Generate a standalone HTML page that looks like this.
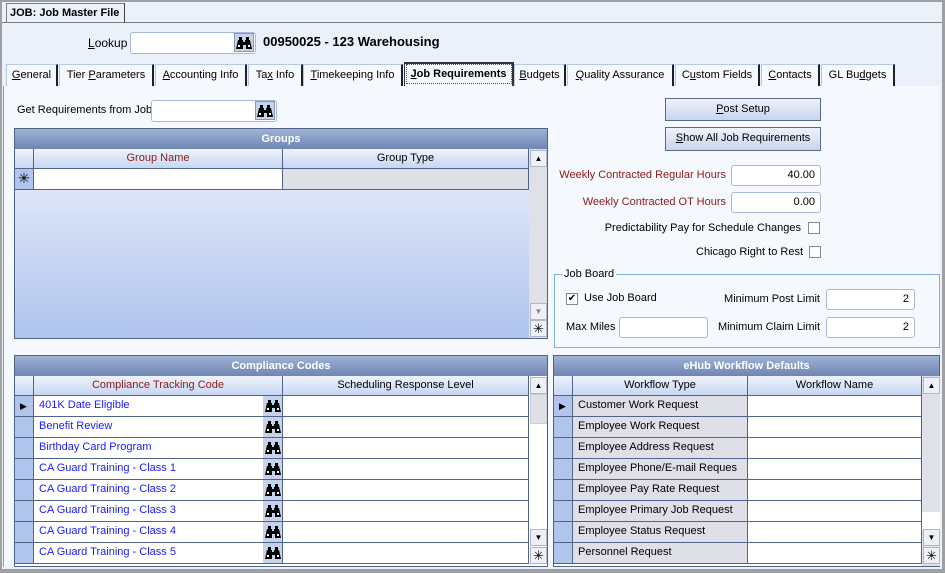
<!DOCTYPE html>
<html><head><meta charset="utf-8">
<style>
*{box-sizing:border-box;margin:0;padding:0}
body{width:945px;height:573px;overflow:hidden;background:#a0a0a0;font-family:"Liberation Sans",sans-serif;font-size:11px;color:#000;position:relative}
.a{position:absolute;white-space:nowrap}
#win{left:2px;top:2px;width:940px;height:567px;background:#eaf1fb}
#pane{left:3px;top:86px;width:936px;height:481px;background:#f5f8fd;border-left:1px solid #8a98b0}
.tab{position:absolute;top:64px;height:22px;background:#f5f8fd;border:1px solid #b8c8e0;border-right:2px solid #1a2030;border-bottom:none;text-align:center;line-height:20px;white-space:nowrap}
.inp{position:absolute;background:#fff;border:1px solid #a8b8d8;border-radius:3px}
.bin{position:absolute;width:20px;height:19px;background:#c4d2ea;border:1px solid #8896b0}
.btn{position:absolute;border:1px solid #5a6a88;background:linear-gradient(#eef2fb,#c9d5ee);text-align:center;line-height:21px}
.grid{position:absolute;border:1px solid #50648a;background:#fff}
.title{position:absolute;left:0;top:0;right:0;height:20px;background:linear-gradient(#9fb2d6,#6e86b2);color:#fff;font-weight:bold;text-align:center;line-height:20px}
.ch{position:absolute;height:20px;background:linear-gradient(#eef3fc,#c7d6f2);border-right:1px solid #50648a;border-bottom:1px solid #50648a;text-align:center;line-height:19px}
.cell{position:absolute;height:21px;border-right:1px solid #50648a;border-bottom:1px solid #50648a;line-height:18px;padding-left:5px;white-space:nowrap;overflow:hidden}
.ind{position:absolute;background:#b0c4ec;border-right:1px solid #50648a;border-bottom:1px solid #50648a}
.sb{position:absolute;background:#e0e0e8}
.sbb{position:absolute;width:17px;height:17px;background:#eef0f6;border:1px solid #b0b8c8;text-align:center;font-size:8px;line-height:15px}
.cb{position:absolute;width:12px;height:12px;border:1px solid #8a8a8a;background:#fff}
.r{text-align:right}
u{text-decoration:underline}
</style></head><body>
<svg width="0" height="0" style="position:absolute"><defs><symbol id="bn" viewBox="0 0 16 14"><path d="M3 1h3v3H3z M10 1h3v3h-3z M2 4h5v2h2V4h5l2 9h-6V9H7v4H0z" fill="#000"/><rect x="2" y="9" width="2" height="2" fill="#fff"/><rect x="12" y="9" width="2" height="2" fill="#fff"/></symbol></defs></svg>
<div id="win" class="a"></div>
<div class="a" style="left:6px;top:3px;width:119px;height:20px;background:#eaf1fb;border:1px solid #808080;border-bottom:none;font-weight:bold;font-size:11px;line-height:18px;padding-left:3px">JOB: Job Master File</div>
<div class="a" style="left:2px;top:22px;width:940px;height:1px;background:#808080"></div>
<div class="a" style="left:124px;top:3px;width:1px;height:20px;background:#404040"></div>

<div class="a" style="left:88px;top:36px;font-size:12px"><u>L</u>ookup</div>
<div class="inp" style="left:130px;top:32px;width:126px;height:22px"></div>
<div class="bin" style="left:234px;top:33px"><svg width="16" height="14" style="margin:2px 1px"><use href="#bn"/></svg></div>
<div class="a" style="left:263px;top:34px;font-weight:bold;font-size:13px">00950025 - 123 Warehousing</div>

<div id="pane" class="a"></div>
<div class="tab" style="left:6px;width:52px"><u>G</u>eneral</div>
<div class="tab" style="left:59px;width:95px">Tier <u>P</u>arameters</div>
<div class="tab" style="left:155px;width:92px"><u>A</u>ccounting Info</div>
<div class="tab" style="left:248px;width:55px">Ta<u>x</u> Info</div>
<div class="tab" style="left:303px;width:100px"><u>T</u>imekeeping Info</div>
<div class="tab" style="left:404px;top:62px;height:24px;width:110px;font-weight:bold;border-color:#333;border-top:2px solid #333;outline:1px dotted #555;outline-offset:-3px"><u>J</u>ob Requirements</div>
<div class="tab" style="left:514px;width:52px"><u>B</u>udgets</div>
<div class="tab" style="left:567px;width:107px"><u>Q</u>uality Assurance</div>
<div class="tab" style="left:675px;width:85px">C<u>u</u>stom Fields</div>
<div class="tab" style="left:761px;width:59px"><u>C</u>ontacts</div>
<div class="tab" style="left:821px;width:74px">GL Bu<u>d</u>gets</div>

<div class="a" style="left:17px;top:104px">Get Requirements from Job</div>
<div class="inp" style="left:151px;top:100px;width:126px;height:22px"></div>
<div class="bin" style="left:255px;top:101px"><svg width="16" height="14" style="margin:2px 1px"><use href="#bn"/></svg></div>

<div class="grid" style="left:14px;top:128px;width:534px;height:211px;background:linear-gradient(#eef2fb,#b0c4ee)">
 <div class="title">Groups</div>
 <div class="ch" style="left:0;top:20px;width:19px"></div>
 <div class="ch" style="left:19px;top:20px;width:249px;color:#8b1a1a">Group Name</div>
 <div class="ch" style="left:268px;top:20px;width:246px">Group Type</div>
 <div class="ind" style="left:0;top:40px;width:19px;height:21px;text-align:center;line-height:19px;font-size:14px">✳</div>
 <div class="cell" style="left:19px;top:40px;width:249px;background:#fff"></div>
 <div class="cell" style="left:268px;top:40px;width:246px;background:#dfdfe7"></div>
 <div class="sb" style="left:514px;top:20px;width:18px;height:189px"></div>
 <div class="sbb" style="left:515px;top:21px">▲</div>
 <div class="sbb" style="left:515px;top:174px;color:#888">▼</div>
 <div class="sbb" style="left:515px;top:191px;font-size:13px">✳</div>
</div>

<div class="btn" style="left:665px;top:98px;width:156px;height:23px"><u>P</u>ost Setup</div>
<div class="btn" style="left:665px;top:127px;width:156px;height:24px"><u>S</u>how All Job Requirements</div>
<div class="a r" style="left:540px;top:169px;width:186px;color:#8b1a1a">Weekly Contracted Regular Hours</div>
<div class="inp r" style="left:731px;top:165px;width:90px;height:21px;padding:3px 5px">40.00</div>
<div class="a r" style="left:540px;top:196px;width:186px;color:#8b1a1a">Weekly Contracted OT Hours</div>
<div class="inp r" style="left:731px;top:192px;width:90px;height:21px;padding:3px 5px">0.00</div>
<div class="a r" style="left:560px;top:222px;width:241px">Predictability Pay for Schedule Changes</div>
<div class="cb" style="left:808px;top:222px"></div>
<div class="a r" style="left:560px;top:246px;width:243px">Chicago Right to Rest</div>
<div class="cb" style="left:809px;top:246px"></div>

<div class="a" style="left:554px;top:274px;width:386px;height:74px;border:1px solid #7fb0e0"></div>
<div class="a" style="left:562px;top:268px;background:#f5f8fd;padding:0 2px">Job Board</div>
<div class="cb" style="left:566px;top:293px;font-size:10px;line-height:10px;text-align:center">✔</div>
<div class="a" style="left:584px;top:292px">Use Job Board</div>
<div class="a r" style="left:690px;top:293px;width:130px">Minimum Post Limit</div>
<div class="inp r" style="left:826px;top:289px;width:89px;height:21px;padding:3px 5px">2</div>
<div class="a" style="left:566px;top:321px">Max Miles</div>
<div class="inp" style="left:619px;top:317px;width:89px;height:21px"></div>
<div class="a r" style="left:690px;top:321px;width:130px">Minimum Claim Limit</div>
<div class="inp r" style="left:826px;top:317px;width:89px;height:21px;padding:3px 5px">2</div>

<div class="grid" style="left:14px;top:355px;width:534px;height:212px">
 <div class="title">Compliance Codes</div>
 <div class="ch" style="left:0;top:20px;width:19px"></div>
 <div class="ch" style="left:19px;top:20px;width:249px;color:#8b1a1a">Compliance Tracking Code</div>
 <div class="ch" style="left:268px;top:20px;width:246px">Scheduling Response Level</div>
 <div id="cc"></div>
 <div class="sb" style="left:514px;top:20px;width:18px;height:190px;background:#fff"></div>
 <div class="sbb" style="left:515px;top:21px">▲</div>
 <div class="a" style="left:515px;top:38px;width:17px;height:30px;background:#dfdfe7;border:1px solid #c8ccd8"></div>
 <div class="sbb" style="left:515px;top:173px">▼</div>
 <div class="sbb" style="left:515px;top:191px;font-size:13px">✳</div>
</div>

<div class="grid" style="left:553px;top:355px;width:387px;height:212px">
 <div class="title">eHub Workflow Defaults</div>
 <div class="ch" style="left:0;top:20px;width:19px"></div>
 <div class="ch" style="left:19px;top:20px;width:175px">Workflow Type</div>
 <div class="ch" style="left:194px;top:20px;width:174px">Workflow Name</div>
 <div id="eh"></div>
 <div class="sb" style="left:368px;top:20px;width:18px;height:190px"></div>
 <div class="sbb" style="left:369px;top:21px">▲</div>
 <div class="a" style="left:368px;top:156px;width:18px;height:18px;background:#fff"></div>
 <div class="sbb" style="left:369px;top:173px">▼</div>
 <div class="sbb" style="left:369px;top:191px;font-size:13px">✳</div>
</div>

<script>
var cc=["401K Date Eligible","Benefit Review","Birthday Card Program","CA Guard Training - Class 1","CA Guard Training - Class 2","CA Guard Training - Class 3","CA Guard Training - Class 4","CA Guard Training - Class 5"];
var h="";
cc.forEach(function(t,i){var y=40+i*21;
h+='<div class="ind" style="left:0;top:'+y+'px;width:19px;height:21px;font-size:9px;line-height:20px;padding-left:5px">'+(i==0?'▶':'')+'</div>';
h+='<div class="cell" style="left:19px;top:'+y+'px;width:230px;color:#1a1aff">'+t+'</div>';
h+='<div class="a" style="left:248px;top:'+y+'px;width:20px;height:21px;background:#c4d2ea;border-right:1px solid #50648a;border-bottom:1px solid #50648a"><svg width="16" height="14" style="margin:3px 2px"><use href="#bn"/></svg></div>';
h+='<div class="cell" style="left:268px;top:'+y+'px;width:246px"></div>';});
document.getElementById("cc").innerHTML=h;
var eh=["Customer Work Request","Employee Work Request","Employee Address Request","Employee Phone/E-mail Reques","Employee Pay Rate Request","Employee Primary Job Request","Employee Status Request","Personnel Request"];
h="";
eh.forEach(function(t,i){var y=40+i*21;
h+='<div class="ind" style="left:0;top:'+y+'px;width:19px;height:21px;font-size:9px;line-height:20px;padding-left:5px">'+(i==0?'▶':'')+'</div>';
h+='<div class="cell" style="left:19px;top:'+y+'px;width:175px;background:#dfdfe7">'+t+'</div>';
h+='<div class="cell" style="left:194px;top:'+y+'px;width:174px"></div>';});
document.getElementById("eh").innerHTML=h;
</script>
</body></html>
